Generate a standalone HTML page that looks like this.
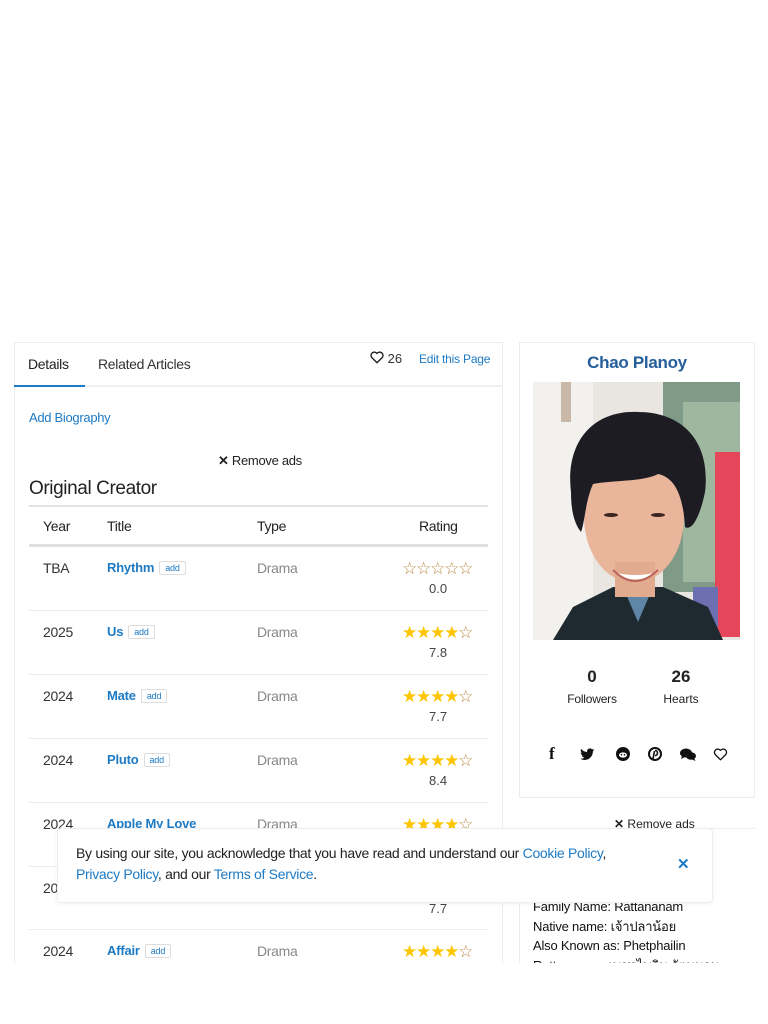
<!DOCTYPE html>
<html><head><meta charset="utf-8"><style>
*{box-sizing:border-box;margin:0;padding:0}
body{width:768px;height:1024px;background:#fff;font-family:"Liberation Sans","Noto Sans CJK SC",sans-serif;color:#222;position:relative;overflow:hidden}
.a{position:absolute;white-space:nowrap}
.blue{color:#1d7ac4}
.card{position:absolute;border:1px solid #ececec;background:#fff}
.yr{font-size:14px;color:#333;letter-spacing:-0.3px}
.ttl{font-size:13px;font-weight:bold;color:#1d7ac4;letter-spacing:-0.2px}
.add{display:inline-block;font-size:9px;font-weight:normal;color:#1d7ac4;border:1px solid #ddd;border-radius:2px;padding:1px 5px;margin-left:5px;vertical-align:1px}
.ty{font-size:14px;color:#888;letter-spacing:-0.3px}
.st{font-family:"DejaVu Sans",sans-serif;font-size:17px;letter-spacing:-1.2px;line-height:16px}
.st .f{color:#fdc600}.st .e{color:#b98a45}
.sc{font-size:13px;color:#444}
.sep{position:absolute;left:29px;width:459px;height:1px;background:#ececec}
.ic{position:absolute;top:746px;font-size:15px;font-weight:bold;color:#111}
</style></head><body>
<div style="position:absolute;left:0;top:0;width:768px;height:963px;overflow:hidden">
<div class="card" style="left:14px;top:342px;width:489px;height:640px"></div>
<div class="a" style="left:14px;top:385px;width:489px;height:2px;background:#eef1f4"></div>
<div class="a" style="left:14px;top:385px;width:71px;height:2px;background:#1d7ac4"></div>
<div class="a" style="left:28px;top:356px;font-size:14px;color:#222;letter-spacing:-0.3px">Details</div>
<div class="a" style="left:98px;top:356px;font-size:14px;color:#333;letter-spacing:-0.3px">Related Articles</div>
<div class="a" style="left:370px;top:351px;font-size:13px;color:#333"><svg width="14" height="13" viewBox="0 0 24 22" style="vertical-align:-1px"><path d="M12 20 L3 11 A5 5 0 0 1 12 4 A5 5 0 0 1 21 11 Z" fill="none" stroke="#222" stroke-width="2.4" stroke-linejoin="round"/></svg> 26</div>
<div class="a blue" style="left:419px;top:352px;font-size:12px;letter-spacing:-0.2px">Edit this Page</div>
<div class="a blue" style="left:29px;top:410px;font-size:13px;letter-spacing:-0.3px">Add Biography</div>
<div class="a" style="left:218px;top:453px;font-size:13px;color:#222;letter-spacing:-0.3px"><b>✕</b> Remove ads</div>
<div class="a" style="left:29px;top:478px;font-size:19px;color:#222;letter-spacing:-0.4px">Original Creator</div>
<div class="a" style="left:29px;top:505px;width:459px;height:2px;background:#e2e2e2"></div>
<div class="a" style="left:43px;top:518px;font-size:14px;letter-spacing:-0.3px">Year</div>
<div class="a" style="left:107px;top:518px;font-size:14px;letter-spacing:-0.3px">Title</div>
<div class="a" style="left:257px;top:518px;font-size:14px;letter-spacing:-0.3px">Type</div>
<div class="a" style="left:419px;top:518px;font-size:14px;letter-spacing:-0.3px">Rating</div>
<div class="a" style="left:29px;top:544px;width:459px;height:3px;background:#e0e0e0"></div>

<div class="a yr" style="left:43px;top:560px">TBA</div>
<div class="a ttl" style="left:107px;top:560px">Rhythm<span class="add">add</span></div>
<div class="a ty" style="left:257px;top:560px">Drama</div>
<div class="a st" style="left:402px;top:561px"><span class="e">☆☆☆☆☆</span></div>
<div class="a sc" style="left:429px;top:581px">0.0</div>
<div class="sep" style="top:610px"></div>

<div class="a yr" style="left:43px;top:624px">2025</div>
<div class="a ttl" style="left:107px;top:624px">Us<span class="add">add</span></div>
<div class="a ty" style="left:257px;top:624px">Drama</div>
<div class="a st" style="left:402px;top:625px"><span class="f">★★★★</span><span class="e">☆</span></div>
<div class="a sc" style="left:429px;top:645px">7.8</div>
<div class="sep" style="top:674px"></div>

<div class="a yr" style="left:43px;top:688px">2024</div>
<div class="a ttl" style="left:107px;top:688px">Mate<span class="add">add</span></div>
<div class="a ty" style="left:257px;top:688px">Drama</div>
<div class="a st" style="left:402px;top:689px"><span class="f">★★★★</span><span class="e">☆</span></div>
<div class="a sc" style="left:429px;top:709px">7.7</div>
<div class="sep" style="top:738px"></div>

<div class="a yr" style="left:43px;top:752px">2024</div>
<div class="a ttl" style="left:107px;top:752px">Pluto<span class="add">add</span></div>
<div class="a ty" style="left:257px;top:752px">Drama</div>
<div class="a st" style="left:402px;top:753px"><span class="f">★★★★</span><span class="e">☆</span></div>
<div class="a sc" style="left:429px;top:773px">8.4</div>
<div class="sep" style="top:802px"></div>

<div class="a yr" style="left:43px;top:816px">2024</div>
<div class="a ttl" style="left:107px;top:816px">Apple My Love</div>
<div class="a ty" style="left:257px;top:816px">Drama</div>
<div class="a st" style="left:402px;top:817px"><span class="f">★★★★</span><span class="e">☆</span></div>
<div class="sep" style="top:866px"></div>
<div class="a yr" style="left:43px;top:880px">2024</div>
<div class="a sc" style="left:429px;top:901px">7.7</div>
<div class="sep" style="top:929px"></div>

<div class="a yr" style="left:43px;top:943px">2024</div>
<div class="a ttl" style="left:107px;top:943px">Affair<span class="add">add</span></div>
<div class="a ty" style="left:257px;top:943px">Drama</div>
<div class="a st" style="left:402px;top:944px"><span class="f">★★★★</span><span class="e">☆</span></div>

<!-- right card -->
<div class="card" style="left:519px;top:342px;width:236px;height:456px"></div>
<div class="a" style="left:519px;top:353px;width:236px;text-align:center;font-size:17px;font-weight:bold;color:#245e9c;letter-spacing:-0.3px">Chao Planoy</div>
<svg class="a" style="left:533px;top:382px" width="207" height="258" viewBox="0 0 207 258">
<rect width="207" height="258" fill="#e9e6e1"/>
<rect x="0" y="0" width="60" height="258" fill="#f3f1ee"/>
<rect x="130" y="0" width="77" height="210" fill="#7f9a86"/>
<rect x="150" y="20" width="57" height="180" fill="#9fb79f"/>
<rect x="182" y="70" width="25" height="185" fill="#e5465a"/>
<rect x="160" y="205" width="25" height="40" fill="#6c6fb0"/>
<rect x="28" y="0" width="10" height="40" fill="#c9b7a8"/>
<path d="M20 258 L40 225 L80 205 L130 205 L175 225 L190 258 Z" fill="#1e2a30"/>
<path d="M90 205 L105 240 L120 205 Z" fill="#5f86a6"/>
<ellipse cx="101" cy="135" rx="50" ry="66" fill="#e9b59b"/>
<rect x="82" y="180" width="40" height="35" fill="#e2aa8e"/>
<path d="M38 110 C32 60 60 28 105 30 C150 30 178 60 172 110 C168 130 160 150 152 145 C150 110 140 95 125 92 C110 100 80 98 60 102 C52 120 52 140 48 150 C40 140 38 125 38 110 Z" fill="#1c1c22"/>
<path d="M80 190 Q102 205 125 190 Q102 196 80 190 Z" fill="#fff"/>
<path d="M80 188 Q102 210 125 188" fill="none" stroke="#b9655a" stroke-width="2"/>
<ellipse cx="78" cy="133" rx="7" ry="2" fill="#3a2520"/>
<ellipse cx="125" cy="133" rx="7" ry="2" fill="#3a2520"/>
</svg>
<div class="a" style="left:582px;top:667px;width:20px;text-align:center;font-size:17px;font-weight:bold;color:#222">0</div>
<div class="a" style="left:562px;top:692px;width:60px;text-align:center;font-size:12px;color:#222;letter-spacing:-0.2px">Followers</div>
<div class="a" style="left:668px;top:667px;width:26px;text-align:center;font-size:17px;font-weight:bold;color:#222">26</div>
<div class="a" style="left:651px;top:692px;width:60px;text-align:center;font-size:12px;color:#222">Hearts</div>
<div class="ic" style="left:549px;font-family:'Liberation Serif',serif;font-size:17px;top:744px">f</div>
<svg class="a" style="left:580px;top:748px" width="15" height="13" viewBox="0 0 24 20"><path d="M23 2.5a9 9 0 0 1-2.7.8A4.7 4.7 0 0 0 22.4.7a9.4 9.4 0 0 1-3 1.1A4.7 4.7 0 0 0 11.4 6 13.3 13.3 0 0 1 1.7 1a4.7 4.7 0 0 0 1.5 6.3 4.7 4.7 0 0 1-2.1-.6 4.7 4.7 0 0 0 3.8 4.6 4.7 4.7 0 0 1-2.1.1 4.7 4.7 0 0 0 4.4 3.3A9.4 9.4 0 0 1 0 16.6 13.3 13.3 0 0 0 7.2 18.7c8.6 0 13.4-7.2 13.4-13.4v-.6A9.5 9.5 0 0 0 23 2.5z" fill="#111"/></svg>
<svg class="a" style="left:616px;top:747px" width="14" height="14" viewBox="0 0 14 14"><circle cx="7" cy="7" r="7" fill="#111"/><ellipse cx="7" cy="8" rx="4" ry="2.6" fill="#fff"/><circle cx="5.5" cy="7.7" r=".8" fill="#111"/><circle cx="8.5" cy="7.7" r=".8" fill="#111"/></svg>
<svg class="a" style="left:648px;top:747px" width="14" height="14" viewBox="0 0 14 14"><circle cx="7" cy="7" r="6" fill="none" stroke="#111" stroke-width="2"/><path d="M7 3.5a2.5 2.5 0 0 1 0 5 M6.5 4 L5 12" fill="none" stroke="#111" stroke-width="1.6"/></svg>
<svg class="a" style="left:680px;top:748px" width="16" height="13" viewBox="0 0 16 13"><ellipse cx="6" cy="5" rx="6" ry="4.5" fill="#111"/><path d="M2 8 L1 11 L5 9Z" fill="#111"/><ellipse cx="11" cy="8" rx="5" ry="3.8" fill="#111"/><path d="M14 10 L15.5 13 L11 11Z" fill="#111"/></svg>
<svg class="a" style="left:713px;top:748px" width="15" height="13" viewBox="0 0 24 22"><path d="M12 20 L3 11 A5 5 0 0 1 12 4 A5 5 0 0 1 21 11 Z" fill="none" stroke="#111" stroke-width="2.2" stroke-linejoin="round"/></svg>

<div class="a" style="left:614px;top:817px;font-size:12px;color:#222"><b>✕</b> Remove ads</div>
<div class="card" style="left:519px;top:828px;width:236px;height:160px;border-right:none"></div>
<div class="a" style="left:533px;top:897px;font-size:13px;line-height:19.5px;color:#111;letter-spacing:-0.2px"><b style="font-weight:500">Family Name:</b> Rattananam<br><b style="font-weight:500">Native name:</b> เจ้าปลาน้อย<br><b style="font-weight:500">Also Known as:</b> Phetphailin<br>Rattananam, เพชรไพลิน รัตนนาม</div>

<!-- cookie banner -->
<div class="a" style="left:57px;top:828px;width:656px;height:75px;background:#fff;border:1px solid #eee;border-radius:4px;box-shadow:0 1px 4px rgba(0,0,0,.06)"></div>
<div class="a" style="left:76px;top:843px;font-size:14px;line-height:21px;color:#222;letter-spacing:-0.3px">By using our site, you acknowledge that you have read and understand our <span class="blue">Cookie Policy</span>,<br><span class="blue">Privacy Policy</span>, and our <span class="blue">Terms of Service</span>.</div>
<div class="a" style="left:677px;top:855px;font-size:15px;font-weight:bold;color:#1d7ac4">✕</div>
</div>
</body></html>
